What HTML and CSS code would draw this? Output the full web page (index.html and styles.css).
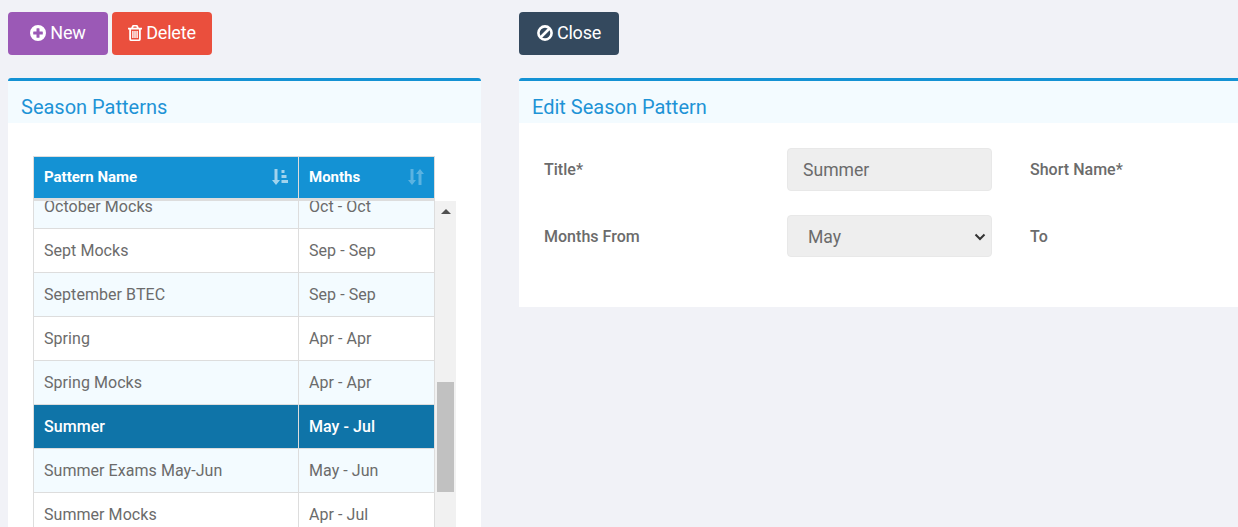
FILE: index.html
```html
<!DOCTYPE html>
<html lang="en">
<head>
    <meta charset="UTF-8">
    <title>Season Patterns</title>
    <link rel="stylesheet" href="styles.css">
</head>
<body>

    <div class="page">
        <div class="col col-left">
            <div class="toolbar">
                <button class="btn btn-new">
                    <svg class="btn-icon" viewBox="0 0 16 16"><path fill-rule="evenodd" d="M8 0a8 8 0 1 0 0 16a8 8 0 1 0 0-16zM7 3.200h2a.5.5 0 0 1 .5.5v2.800h2.800a.5.5 0 0 1 .5.5v2a.5.5 0 0 1-.5.5h-2.800v2.800a.5.5 0 0 1-.5.5h-2a.5.5 0 0 1-.5-.5v-2.800h-2.800a.5.5 0 0 1-.5-.5v-2a.5.5 0 0 1 .5-.5h2.800v-2.800a.5.5 0 0 1 .5-.5z"/></svg>
                    New
                </button>
                <button class="btn btn-delete">
                    <svg class="btn-icon btn-icon-trash" viewBox="0 0 14 16"><path fill-rule="evenodd" d="M0 2.800h3.200l1-2.200c.2-.4.500-.6.900-.6h3.800c.4 0 .7.2.9.6l1 2.200h3.200v1.800h-1.200v9.400c0 1.100-.7 2-1.500 2h-8.600c-.8 0-1.500-.9-1.500-2v-9.400h-1.200zM5.200 2.800h3.600l-.5-1.200h-2.600zM3 4.600v9.400c0 .3.200.5.300.5h7.400c.1 0 .3-.2.300-.5v-9.400zM4.200 6h1.400v7h-1.400zM6.300 6h1.400v7h-1.400zM8.400 6h1.400v7h-1.400z"/></svg>
                    Delete
                </button>
            </div>

            <div class="panel">
                <div class="panel-title">Season Patterns</div>
                <div class="panel-body panel-body-list">
                    <div class="grid-head">
                        <div class="head-cell cell-name">
                            Pattern Name
                            <svg class="sort-icon sort-on" viewBox="0 0 16 16"><path d="M2.500 0h3v11h2.500l-4 5l-4-5h2.500zM9.500 1h3v3h-3zM9.500 6h5v3h-5zM9.500 11h6.500v3h-6.500z"/></svg>
                        </div>
                        <div class="head-cell cell-months">
                            Months
                            <svg class="sort-icon sort-off" viewBox="0 0 16 16"><path d="M2.500 0h3v11h2.500l-4 5l-4-5h2.500zM10.500 16h3v-11h2.500l-4-5l-4 5h2.500z"/></svg>
                        </div>
                    </div>
                    <div class="grid-scroll">
                        <div class="rows">
                            <div class="row row-alt"><div class="cell cell-name">October Mocks</div><div class="cell cell-months">Oct - Oct</div></div>
                            <div class="row"><div class="cell cell-name">Sept Mocks</div><div class="cell cell-months">Sep - Sep</div></div>
                            <div class="row row-alt"><div class="cell cell-name">September BTEC</div><div class="cell cell-months">Sep - Sep</div></div>
                            <div class="row"><div class="cell cell-name">Spring</div><div class="cell cell-months">Apr - Apr</div></div>
                            <div class="row row-alt"><div class="cell cell-name">Spring Mocks</div><div class="cell cell-months">Apr - Apr</div></div>
                            <div class="row row-selected"><div class="cell cell-name">Summer</div><div class="cell cell-months">May - Jul</div></div>
                            <div class="row row-alt"><div class="cell cell-name">Summer Exams May-Jun</div><div class="cell cell-months">May - Jun</div></div>
                            <div class="row"><div class="cell cell-name">Summer Mocks</div><div class="cell cell-months">Apr - Jul</div></div>
                        </div>
                        <div class="scrollbar">
                            <div class="scroll-arrow"></div>
                            <div class="scroll-thumb"></div>
                        </div>
                    </div>
                </div>
            </div>
        </div>

        <div class="col col-right">
            <div class="toolbar">
                <button class="btn btn-close">
                    <svg class="btn-icon" viewBox="0 0 16 16"><circle cx="8" cy="8" r="6.600" fill="none" stroke="white" stroke-width="2.600"/><path d="M3.500 12.500L12.500 3.500" stroke="white" stroke-width="2.600"/></svg>
                    Close
                </button>
            </div>

            <div class="panel">
                <div class="panel-title">Edit Season Pattern</div>
                <div class="panel-body panel-body-form">
                    <div class="form-row form-row-first">
                        <label class="form-label">Title*</label>
                        <input class="form-input" type="text" value="Summer">
                        <label class="form-label form-label-second">Short Name*</label>
                    </div>
                    <div class="form-row">
                        <label class="form-label">Months From</label>
                        <div class="form-select">
                            <span class="select-value">May</span>
                            <svg class="select-arrow" viewBox="0 0 12 8"><path d="M1.500 1.500L6 6l4.500-4.500" fill="none" stroke="#333" stroke-width="2"/></svg>
                        </div>
                        <label class="form-label form-label-second">To</label>
                    </div>
                </div>
            </div>
        </div>
    </div>

</body>
</html>
```

FILE: styles.css
```css
* {
    margin: 0;
    padding: 0;
    box-sizing: border-box;
}
html, body {
    height: 527px;
    overflow: hidden;
}
body {
    background-color: #f1f2f7;
    color: #6b6b6b;
    font-family: Roboto, Arial, sans-serif;
    font-size: 16px;
}
.page {
    display: flex;
    gap: 38px;
    padding: 12px 0 0 8px;
    width: 1400px;
}
.col-left {
    width: 473px;
    flex: none;
}
.col-right {
    flex: 1;
}
.toolbar {
    display: flex;
    gap: 4px;
    margin-bottom: 23px;
}
.btn {
    width: 100px;
    height: 43px;
    padding-bottom: 2px;
    border: none;
    border-radius: 4px;
    color: white;
    font-family: inherit;
    font-size: 18px;
    letter-spacing: -0.2px;
    display: flex;
    align-items: center;
    justify-content: center;
    gap: 4px;
}
.btn-icon {
    width: 16px;
    height: 16px;
    fill: white;
}
.btn-icon-trash {
    width: 14px;
}
.btn-new {
    background-color: #9b59b6;
}
.btn-delete {
    background-color: #ea4f3d;
}
.btn-close {
    background-color: #34495e;
}
.panel {
    border-top: 3px solid #1492d4;
    border-radius: 3px 3px 0 0;
    background-color: white;
}
.panel-title {
    height: 42px;
    padding: 15px 13px 0;
    background-color: #f3fbff;
    color: #1e93d6;
    font-size: 20px;
    line-height: 22px;
}
.panel-body-list {
    padding: 33px 0 0 25px;
}
.grid-head {
    display: flex;
    width: 402px;
    height: 45px;
    border: 1px solid #ddd;
    border-bottom: 3px solid #ddd;
    background-color: #1492d4;
}
.head-cell {
    display: flex;
    align-items: center;
    justify-content: space-between;
    color: white;
    font-size: 15px;
    font-weight: 700;
    padding: 0 10px 2px;
}
.cell-name {
    width: 265px;
    flex: none;
}
.cell-months {
    flex: 1;
}
.grid-head .cell-name {
    border-right: 1px solid #ddd;
}
.sort-icon {
    width: 16px;
    height: 16px;
    fill: white;
}
.sort-on {
    opacity: 0.6;
}
.sort-off {
    opacity: 0.3;
}
.grid-scroll {
    position: relative;
    display: flex;
    height: 340px;
    overflow: hidden;
}
.rows {
    width: 402px;
    margin-top: -16px;
    flex: none;
    letter-spacing: 0.05px;
}
.row {
    display: flex;
    height: 44px;
    border: 1px solid #ddd;
    border-top: none;
    background-color: white;
}
.row-alt {
    background-color: #f3fbff;
}
.row-selected {
    background-color: #0f74a8;
    color: white;
    font-weight: 500;
}
.cell {
    display: flex;
    align-items: center;
    padding: 0 10px;
}
.row .cell-name {
    border-right: 1px solid #ddd;
}
.scrollbar {
    position: relative;
    width: 21px;
    background-color: #f1f1f1;
}
.scroll-arrow {
    width: 0;
    margin: 8px auto 0;
    border-left: 5px solid transparent;
    border-right: 5px solid transparent;
    border-bottom: 5px solid #505050;
}
.scroll-thumb {
    position: absolute;
    top: 181px;
    left: 2px;
    width: 17px;
    height: 110px;
    background-color: #c1c1c1;
}
.panel-body-form {
    height: 184px;
    padding: 25px 0 0 25px;
}
.form-row {
    display: flex;
    align-items: center;
    margin-bottom: 24px;
}
.form-label {
    width: 243px;
    flex: none;
    font-weight: 500;
    color: #6b6b6b;
    letter-spacing: 0.02px;
}
.form-label-second {
    margin-left: 38px;
}
.form-input, .form-select {
    width: 205px;
    flex: none;
    background-color: #eee;
    border: 1px solid #e8e8e8;
    border-radius: 4px;
    color: #6b6b6b;
    font-family: inherit;
    font-size: 17.6px;
}
.form-input {
    height: 43px;
    padding: 0 15px;
}
.form-select {
    height: 42px;
    padding: 2px 21px 0 20px;
    display: flex;
    align-items: center;
    justify-content: space-between;
}
.select-arrow {
    width: 12px;
    height: 8px;
    margin-right: -16px;
}
```
